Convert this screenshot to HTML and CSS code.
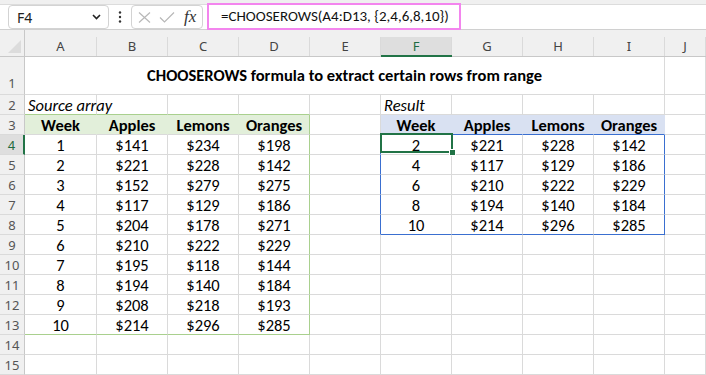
FILE: index.html
```html
<!DOCTYPE html>
<html lang="en">
<head>
  <meta charset="UTF-8">
  <title>CHOOSEROWS</title>
  <link rel="stylesheet" href="styles.css">
</head>
<body>

  <div class="topbar">
    <div class="name-box">
      <span>F4</span>
      <svg class="chev" width="9" height="6" viewBox="0 0 9 6"><path d="M1 1 L4.5 4.5 L8 1" fill="none" stroke="#222" stroke-width="1.6"/></svg>
    </div>
    <svg class="dots" width="4" height="12" viewBox="0 0 4 12"><circle cx="2" cy="1.5" r="1.2" fill="#333"/><circle cx="2" cy="6" r="1.2" fill="#333"/><circle cx="2" cy="10.5" r="1.2" fill="#333"/></svg>
    <div class="fx-box">
      <svg width="13" height="11" viewBox="0 0 13 11"><path d="M1 0.5 L12 10.5 M12 0.5 L1 10.5" stroke="#b8b8b8" stroke-width="1.2" fill="none"/></svg>
      <svg width="16" height="11" viewBox="0 0 16 11"><path d="M1 5.5 L5.5 10 L15 0.5" stroke="#b8b8b8" stroke-width="1.2" fill="none"/></svg>
      <span class="fx">fx</span>
    </div>
    <div class="formula">=CHOOSEROWS(A4:D13, {2,4,6,8,10})</div>
  </div>

  <div class="sheet" id="sheet"></div>

  <script>
    const source = [
      [1, 141, 234, 198], [2, 221, 228, 142], [3, 152, 279, 275], [4, 117, 129, 186],
      [5, 204, 178, 271], [6, 210, 222, 229], [7, 195, 118, 144], [8, 194, 140, 184],
      [9, 208, 218, 193], [10, 214, 296, 285]
    ];
    const result = source.filter(r => r[0] % 2 === 0);
    const letters = ["A", "B", "C", "D", "E", "F", "G", "H", "I", "J"];
    const sheet = document.getElementById("sheet");

    function cell(text, cls) {
      const d = document.createElement("div");
      d.className = "c " + (cls || "");
      if (text !== undefined && text !== "") d.textContent = text;
      sheet.appendChild(d);
      return d;
    }

    // column headers
    const corner = document.createElement("div");
    corner.className = "corner";
    corner.innerHTML = '<i></i>';
    sheet.appendChild(corner);
    letters.forEach(l => {
      const h = document.createElement("div");
      h.className = "col-head" + (l === "F" ? " active" : "");
      h.innerHTML = "<span>" + l + "</span>";
      sheet.appendChild(h);
    });

    for (let r = 1; r <= 15; r++) {
      const rh = document.createElement("div");
      rh.className = "row-head" + (r === 4 ? " active" : "") + (r === 1 ? " tall" : "");
      rh.textContent = r;
      sheet.appendChild(rh);

      if (r === 1) {
        cell("CHOOSEROWS formula to extract certain rows from range", "title");
        cell("");
        continue;
      }

      for (let c = 0; c < 10; c++) {
        const col = letters[c];
        let text = "";
        const cls = [];

        // source table A3:D13
        if (c <= 3) {
          if (r === 2 && c === 0) { text = "Source array"; cls.push("note"); }
          if (r === 2) cls.push("g-bottom");
          if (r === 3) { text = ["Week", "Apples", "Lemons", "Oranges"][c]; cls.push("th-green"); }
          if (r >= 4 && r <= 13) {
            const v = source[r - 4][c];
            text = c === 0 ? v : "$" + v;
          }
          if (c === 3 && r >= 3 && r <= 13) cls.push("g-right");
          if (r === 13) cls.push("g-bottom");
        }

        // result F3:I8
        if (c >= 5 && c <= 8) {
          const k = c - 5;
          if (r === 2 && c === 5) { text = "Result"; cls.push("note"); }
          if (r === 3) { text = ["Week", "Apples", "Lemons", "Oranges"][k]; cls.push("th-blue", "b-bottom"); }
          if (r >= 4 && r <= 8) {
            const v = result[r - 4][k];
            text = k === 0 ? v : "$" + v;
            if (c === 8) cls.push("b-right");
            if (r === 8) cls.push("b-bottom");
          }
        }
        if (c === 4 && r >= 4 && r <= 8) cls.push("b-right");

        const d = cell(text, cls.join(" "));
        if (r === 4 && col === "F") {
          d.classList.add("selected");
          d.insertAdjacentHTML("beforeend", '<div class="sel-box"><div class="handle"></div></div>');
        }
      }
    }
  </script>

</body>
</html>
```

FILE: styles.css
```css
body {
  margin: 0;
  background: #f0f0f0;
  font-family: Calibri, Carlito, Lato, "Liberation Sans", sans-serif;
  overflow: hidden;
}

.topbar {
  margin-top: 4px;
  height: 24px;
  border-top: 1px solid #dcdcdc;
  border-bottom: 1px solid #d0d0d0;
  background: #fff;
  display: flex;
  align-items: flex-start;
}

.name-box {
  margin-left: 8px;
  width: 101px;
  height: 24px;
  box-sizing: border-box;
  border: 1px solid #d3d3d3;
  border-radius: 4px;
  display: flex;
  align-items: center;
  justify-content: space-between;
  padding: 0 7px 0 8px;
  font-family: "Noto Sans", sans-serif;
  font-size: 14px;
  color: #222;
}

.dots {
  margin: 6px 0 0 9px;
}

.fx-box {
  margin-left: 9px;
  width: 72px;
  height: 24px;
  box-sizing: border-box;
  border: 1px solid #d3d3d3;
  border-radius: 4px;
  display: flex;
  align-items: center;
  gap: 8px;
  padding-left: 6px;
}

.fx {
  font-family: "Liberation Serif", serif;
  font-style: italic;
  font-size: 17px;
  color: #333;
  margin-left: 1px;
}

.formula {
  margin: -2px 0 0 4px;
  width: 254px;
  height: 27px;
  box-sizing: border-box;
  border: 2px solid #f385ee;
  padding: 2px 0 0 12px;
  font-size: 15px;
  color: #111;
  white-space: nowrap;
}

.sheet {
  display: grid;
  grid-template-columns: 25px 72px repeat(8, 71px) 1fr;
  grid-template-rows: 27px 38px;
  grid-auto-rows: 20px;
  background: #fff;
}

.corner {
  background: #f0f0f0;
  border-right: 1px solid #c8c8c8;
  border-bottom: 1px solid #c8c8c8;
  box-sizing: border-box;
  position: relative;
}

.corner i {
  position: absolute;
  right: 3px;
  bottom: 3px;
  width: 0;
  height: 0;
  border-left: 13px solid transparent;
  border-bottom: 13px solid #dcdcdc;
}

.col-head {
  background: #f0f0f0;
  padding-top: 7px;
  border-bottom: 1px solid #c8c8c8;
  box-sizing: border-box;
}

.col-head span {
  display: block;
  height: 19px;
  border-right: 1px solid #dadada;
  text-align: center;
  font-family: "Noto Sans", sans-serif;
  font-size: 13px;
  line-height: 19px;
  color: #444;
}

.col-head.active {
  border-bottom: 2px solid #217346;
}

.col-head.active span {
  height: 18px;
  background: #dedede;
  color: #1e6b41;
}

.row-head {
  background: #f0f0f0;
  border-right: 1px solid #c8c8c8;
  border-bottom: 1px solid #dadada;
  box-sizing: border-box;
  text-align: center;
  font-family: "Noto Sans", sans-serif;
  font-size: 13px;
  line-height: 20px;
  color: #555;
}

.row-head.tall {
  line-height: 52px;
}

.row-head.active {
  background: #dedede;
  border-right: 2px solid #217346;
  color: #1e6b41;
}

.c {
  border-right: 1px solid #dadada;
  border-bottom: 1px solid #dadada;
  box-sizing: border-box;
  text-align: center;
  font-size: 16.5px;
  line-height: 20px;
  color: #000;
  white-space: nowrap;
}

.title {
  grid-column: span 9;
  font-weight: bold;
  line-height: 37px;
}

.note {
  text-align: left;
  font-style: italic;
  padding-left: 3px;
  overflow: visible;
}

.th-green {
  background: #e2efda;
  border-right-color: #e2efda;
  font-weight: bold;
}

.th-blue {
  background: #d9e1f2;
  border-right-color: #d9e1f2;
  font-weight: bold;
}

.g-right {
  border-right-color: #a9d08e;
}

.g-bottom {
  border-bottom-color: #a9d08e;
}

.b-right {
  border-right-color: #3a6fd0;
}

.b-bottom {
  border-bottom-color: #3a6fd0;
}

.selected {
  position: relative;
}

.sel-box {
  position: absolute;
  top: -2px;
  left: -1px;
  right: -2px;
  bottom: 1px;
  border: 2px solid #217346;
}

.handle {
  position: absolute;
  right: -5px;
  bottom: -5px;
  width: 5px;
  height: 5px;
  background: #217346;
  border: 1px solid #fff;
}
```
